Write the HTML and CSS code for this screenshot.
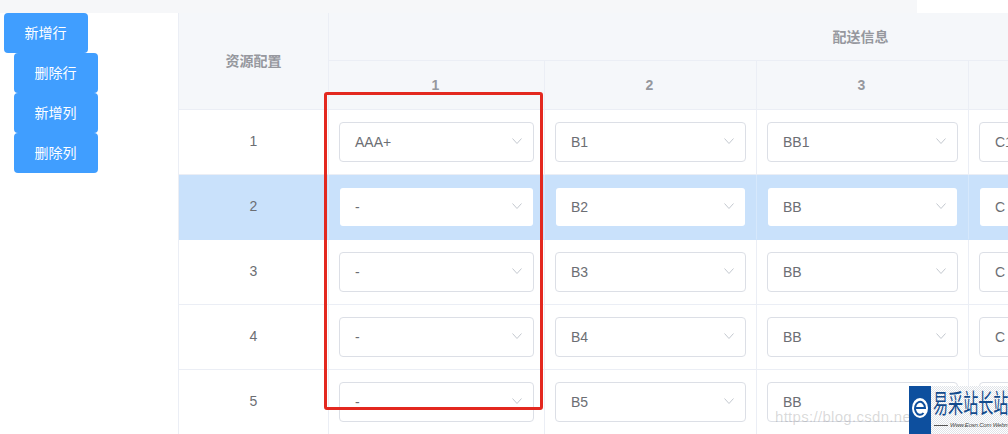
FILE: index.html
```html
<!DOCTYPE html>
<html lang="en">
  <head>
    <title>资源配置</title>
    <meta charset="utf-8" />
    <link rel="stylesheet" href="styles.css">
  </head>
  <body>
    <div class="topstrip"></div>
    <div class="page">
      <div class="actions">
        <button class="btn first">新增行</button>
        <button class="btn">删除行</button>
        <button class="btn">新增列</button>
        <button class="btn">删除列</button>
      </div>
      <div class="tablewrap">
        <table class="grid">
          <colgroup>
            <col class="c0"><col class="cn first"><col class="cn"><col class="cn"><col class="cn"><col class="cn">
          </colgroup>
          <thead>
            <tr class="head1">
              <th rowspan="2" class="corner"><span class="label">资源配置</span></th>
              <th colspan="5" class="group"><span class="label">配送信息</span></th>
            </tr>
            <tr class="head2">
              <th>1</th><th>2</th><th>3</th><th>4</th><th>5</th>
            </tr>
          </thead>
          <tbody>
            <tr>
              <td><span class="label">1</span></td>
              <td><div class="sel"><span>AAA+</span><svg class="arrow" viewBox="0 0 10 6"><path d="M.5.5 5 5.500 9.500.5"/></svg></div></td>
              <td><div class="sel"><span>B1</span><svg class="arrow" viewBox="0 0 10 6"><path d="M.5.5 5 5.500 9.500.5"/></svg></div></td>
              <td><div class="sel"><span>BB1</span><svg class="arrow" viewBox="0 0 10 6"><path d="M.5.5 5 5.500 9.500.5"/></svg></div></td>
              <td><div class="sel"><span>C1</span><svg class="arrow" viewBox="0 0 10 6"><path d="M.5.5 5 5.500 9.500.5"/></svg></div></td>
              <td></td>
            </tr>
            <tr class="active">
              <td><span class="label">2</span></td>
              <td><div class="sel"><span>-</span><svg class="arrow" viewBox="0 0 10 6"><path d="M.5.5 5 5.500 9.500.5"/></svg></div></td>
              <td><div class="sel"><span>B2</span><svg class="arrow" viewBox="0 0 10 6"><path d="M.5.5 5 5.500 9.500.5"/></svg></div></td>
              <td><div class="sel"><span>BB</span><svg class="arrow" viewBox="0 0 10 6"><path d="M.5.5 5 5.500 9.500.5"/></svg></div></td>
              <td><div class="sel"><span>C</span><svg class="arrow" viewBox="0 0 10 6"><path d="M.5.5 5 5.500 9.500.5"/></svg></div></td>
              <td></td>
            </tr>
            <tr>
              <td><span class="label">3</span></td>
              <td><div class="sel"><span>-</span><svg class="arrow" viewBox="0 0 10 6"><path d="M.5.5 5 5.500 9.500.5"/></svg></div></td>
              <td><div class="sel"><span>B3</span><svg class="arrow" viewBox="0 0 10 6"><path d="M.5.5 5 5.500 9.500.5"/></svg></div></td>
              <td><div class="sel"><span>BB</span><svg class="arrow" viewBox="0 0 10 6"><path d="M.5.5 5 5.500 9.500.5"/></svg></div></td>
              <td><div class="sel"><span>C</span><svg class="arrow" viewBox="0 0 10 6"><path d="M.5.5 5 5.500 9.500.5"/></svg></div></td>
              <td></td>
            </tr>
            <tr>
              <td><span class="label">4</span></td>
              <td><div class="sel"><span>-</span><svg class="arrow" viewBox="0 0 10 6"><path d="M.5.5 5 5.500 9.500.5"/></svg></div></td>
              <td><div class="sel"><span>B4</span><svg class="arrow" viewBox="0 0 10 6"><path d="M.5.5 5 5.500 9.500.5"/></svg></div></td>
              <td><div class="sel"><span>BB</span><svg class="arrow" viewBox="0 0 10 6"><path d="M.5.5 5 5.500 9.500.5"/></svg></div></td>
              <td><div class="sel"><span>C</span><svg class="arrow" viewBox="0 0 10 6"><path d="M.5.5 5 5.500 9.500.5"/></svg></div></td>
              <td></td>
            </tr>
            <tr>
              <td><span class="label">5</span></td>
              <td><div class="sel"><span>-</span><svg class="arrow" viewBox="0 0 10 6"><path d="M.5.5 5 5.500 9.500.5"/></svg></div></td>
              <td><div class="sel"><span>B5</span><svg class="arrow" viewBox="0 0 10 6"><path d="M.5.5 5 5.500 9.500.5"/></svg></div></td>
              <td><div class="sel"><span>BB</span><svg class="arrow" viewBox="0 0 10 6"><path d="M.5.5 5 5.500 9.500.5"/></svg></div></td>
              <td><div class="sel"><span>C</span><svg class="arrow" viewBox="0 0 10 6"><path d="M.5.5 5 5.500 9.500.5"/></svg></div></td>
              <td></td>
            </tr>
          </tbody>
        </table>
      </div>
    </div>

    <!-- marks drawn on top of the screenshot -->
    <div class="redbox"></div>
    <div class="wm-text">https://blog.csdn.net</div>
    <div class="wm-logo">
      <svg class="wm-icon" viewBox="0 0 22 48">
        <rect width="22" height="48" fill="#0d4f9e"/>
        <ellipse cx="11" cy="22" rx="8" ry="10" fill="#fff"/>
        <path d="M5.500 22H16A5 6.500 0 1 0 14.500 27" fill="none" stroke="#0d4f9e" stroke-width="2"/>
      </svg>
      <div class="wm-body">
        <div class="wm-name">易采站长站</div>
        <div class="wm-sub"><i class="wm-rule"></i><span>Www.Eosn.Com Webmaster</span></div>
      </div>
    </div>
  </body>
</html>
```

FILE: styles.css
```css
html, body {
  height: 100%;
}
body {
  margin: 0;
  background: #fff;
  color: #606266;
  font-family: "Liberation Sans", "Noto Sans CJK SC", sans-serif;
  font-size: 14px;
  overflow: hidden;
  position: relative;
}

.topstrip {
  height: 13px;
  width: 917px;
  background: #f6f7f9;
}

.page {
  display: flex;
  align-items: flex-start;
}

.actions {
  width: 178px;
  flex: none;
  display: flex;
  flex-direction: column;
  align-items: flex-start;
}

.btn {
  width: 84px;
  height: 40px;
  margin-left: 14px;
  padding: 0 1px 2px 0;
  border: 0;
  border-radius: 4px;
  background: #409eff;
  color: #fff;
  font: 14px "Liberation Sans", "Noto Sans CJK SC", sans-serif;
}
.btn.first {
  margin-left: 4px;
}

.tablewrap {
  flex: 1;
  min-width: 0;
  overflow: hidden;
}

.grid {
  table-layout: fixed;
  width: 1215px;
  border-collapse: separate;
  border-spacing: 0;
  border-left: 1px solid #ebeef5;
}
.c0 { width: 150px; }
.cn { width: 212px; }
.cn.first { width: 216px; }

th {
  background: #f5f7fa;
  color: #96989e;
  font-size: 14px;
  font-weight: bold;
  padding: 0 2px 0 0;
  text-align: center;
  border-right: 1px solid #ebeef5;
  border-bottom: 1px solid #ebeef5;
}
.head1 th { height: 47px; padding-right: 0; }
.head2 th { height: 48px; }
th.group .label,
th.corner .label {
  display: inline-block;
  padding-bottom: 2px;
}

td {
  height: 64px;
  padding: 0;
  text-align: center;
  border-right: 1px solid #ebeef5;
  border-bottom: 1px solid #ebeef5;
}
td .label {
  display: inline-block;
  color: #6c6e73;
  padding-bottom: 2px;
}
tr.active td {
  background: #c9e1fb;
  border-bottom-color: #c9e1fb;
  border-right-color: #d6e8fc;
}

.sel {
  box-sizing: border-box;
  height: 40px;
  margin: 0 10px;
  padding: 0 11px 0 15px;
  display: flex;
  align-items: center;
  justify-content: space-between;
  background: #fff;
  background-clip: padding-box;
  border: 1px solid #dcdfe6;
  border-radius: 4px;
  color: #6c6e73;
  text-align: left;
}
tr.active .sel {
  border-color: transparent;
}
.arrow {
  width: 10px;
  height: 6px;
  margin-top: -3px;
  fill: none;
  stroke: #c4c8cf;
  stroke-width: 1;
}

.redbox {
  position: absolute;
  left: 324px;
  top: 92px;
  width: 213px;
  height: 312px;
  border: 3px solid #e3281f;
  border-radius: 3px;
}

.wm-text {
  position: absolute;
  left: 775px;
  top: 408px;
  color: rgba(120, 120, 120, 0.28);
  font-size: 15px;
  letter-spacing: 0.3px;
}

.wm-logo {
  position: absolute;
  left: 909px;
  top: 386px;
  width: 99px;
  height: 48px;
  display: flex;
  overflow: hidden;
  background: repeating-conic-gradient(#dfe3e8 0 25%, #fff 0 50%) 0 0 / 2px 2px;
}
.wm-icon {
  width: 22px;
  height: 48px;
  flex: none;
}
.wm-body {
  min-width: 0;
  overflow: hidden;
}
.wm-name {
  margin: 3px 0 0 2px;
  color: #124a8c;
  font-size: 26px;
  line-height: 30px;
  white-space: nowrap;
  transform: scaleX(0.58);
  transform-origin: left center;
}
.wm-sub {
  display: flex;
  align-items: center;
  margin: 2px 0 0 3px;
  color: #444;
  font-size: 6px;
  font-style: italic;
  letter-spacing: -0.2px;
  line-height: 9px;
  white-space: nowrap;
}
.wm-rule {
  width: 14px;
  height: 1px;
  margin-right: 2px;
  flex: none;
  background: #555;
}
```
